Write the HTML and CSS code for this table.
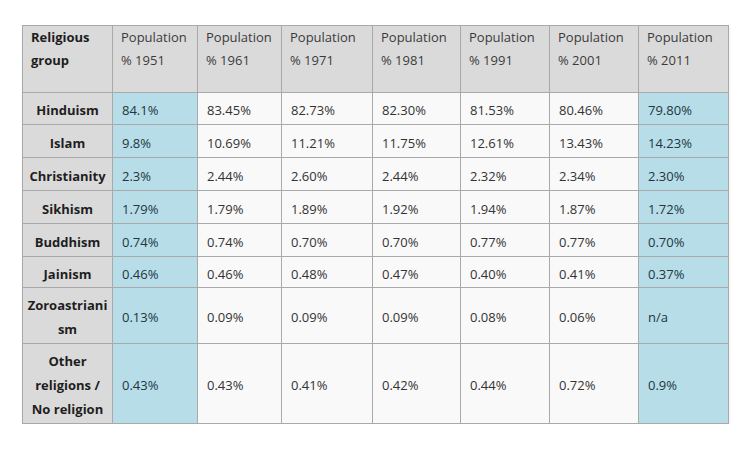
FILE: index.html
```html
<!DOCTYPE html>
<html>
<head>
<meta charset="utf-8">
<link rel="stylesheet" href="styles.css">
</head>
<body>
<table class="rel">
  <colgroup>
    <col class="c0"><col class="c1"><col class="c2"><col class="c3"><col class="c4"><col class="c5"><col class="c6"><col class="c7">
  </colgroup>
  <thead>
    <tr class="h">
      <th class="lab">Religious group</th>
      <th>Population % 1951</th>
      <th>Population % 1961</th>
      <th>Population % 1971</th>
      <th>Population % 1981</th>
      <th>Population % 1991</th>
      <th>Population % 2001</th>
      <th>Population % 2011</th>
    </tr>
  </thead>
  <tbody>
    <tr class="r32"><td class="lab">Hinduism</td><td class="b">84.1%</td><td>83.45%</td><td>82.73%</td><td>82.30%</td><td>81.53%</td><td>80.46%</td><td class="b">79.80%</td></tr>
    <tr class="r33"><td class="lab">Islam</td><td class="b">9.8%</td><td>10.69%</td><td>11.21%</td><td>11.75%</td><td>12.61%</td><td>13.43%</td><td class="b">14.23%</td></tr>
    <tr class="r33"><td class="lab">Christianity</td><td class="b">2.3%</td><td>2.44%</td><td>2.60%</td><td>2.44%</td><td>2.32%</td><td>2.34%</td><td class="b">2.30%</td></tr>
    <tr class="r33"><td class="lab">Sikhism</td><td class="b">1.79%</td><td>1.79%</td><td>1.89%</td><td>1.92%</td><td>1.94%</td><td>1.87%</td><td class="b">1.72%</td></tr>
    <tr class="r33"><td class="lab">Buddhism</td><td class="b">0.74%</td><td>0.74%</td><td>0.70%</td><td>0.70%</td><td>0.77%</td><td>0.77%</td><td class="b">0.70%</td></tr>
    <tr class="r31"><td class="lab">Jainism</td><td class="b">0.46%</td><td>0.46%</td><td>0.48%</td><td>0.47%</td><td>0.40%</td><td>0.41%</td><td class="b">0.37%</td></tr>
    <tr class="r56"><td class="lab">Zoroastriani sm</td><td class="b">0.13%</td><td>0.09%</td><td>0.09%</td><td>0.09%</td><td>0.08%</td><td>0.06%</td><td class="b">n/a</td></tr>
    <tr class="r80"><td class="lab">Other religions / No religion</td><td class="b">0.43%</td><td>0.43%</td><td>0.41%</td><td>0.42%</td><td>0.44%</td><td>0.72%</td><td class="b">0.9%</td></tr>
  </tbody>
</table>
</body>
</html>
```

FILE: styles.css
```css
html, body {
  margin: 0;
  padding: 0;
  background: #ffffff;
}
body {
  padding: 25px 0 0 22px;
  font-family: "Open Sans", "Liberation Sans", sans-serif;
  font-size: 13px;
  color: #333333;
}
.rel {
  border-collapse: collapse;
  table-layout: fixed;
  width: 706px;
  border: 1px solid #a4a4a4;
  box-shadow: 1px 2px 3px rgba(0,0,0,0.06);
}
.c0 { width: 90px; }
.c1 { width: 85px; }
.c2 { width: 84px; }
.c3 { width: 91px; }
.c4 { width: 88px; }
.c5 { width: 89px; }
.c6 { width: 89px; }
.c7 { width: 90px; }
.rel th, .rel td {
  border: 1px solid #a9a9a9;
  padding: 0 8px;
  line-height: 24px;
  box-sizing: border-box;
}
.rel th {
  background: #dadada;
  font-weight: normal;
  text-align: left;
  vertical-align: top;
  padding-top: 0;
  line-height: 23px;
  color: #3a3a3a;
}
.rel th.lab {
  font-weight: bold;
  color: #1e1e1e;
}
.rel td {
  background: #f9f9f9;
  vertical-align: middle;
  padding: 3px 8px 0 9px;
}
.rel td.lab {
  background: #dadada;
  font-weight: bold;
  text-align: center;
  color: #1e1e1e;
  padding: 3px 3px 0;
}
.rel td.b {
  background: #b7dde8;
  color: #22363f;
}
.h { height: 67px; }
.r32 { height: 32px; }
.r33 { height: 33px; }
.r31 { height: 31px; }
.r56 { height: 56px; }
.r80 { height: 80px; }
```
